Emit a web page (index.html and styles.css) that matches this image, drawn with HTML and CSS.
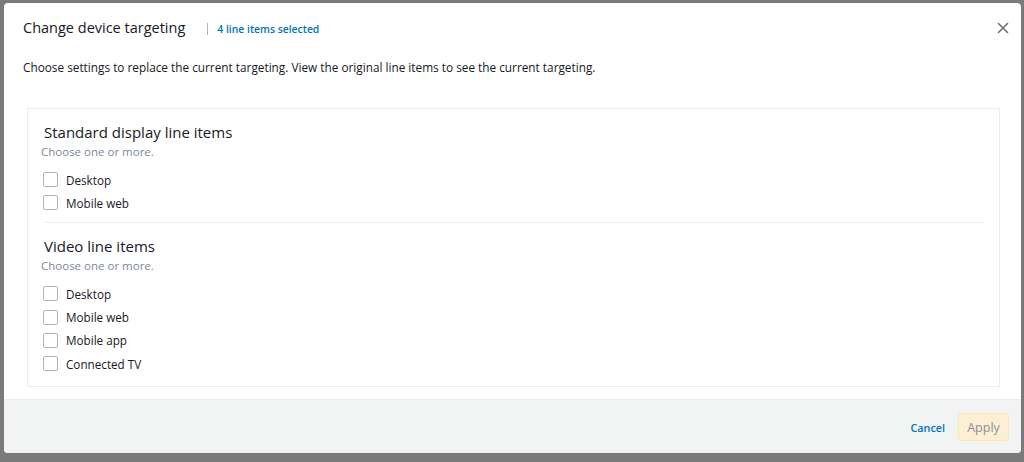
FILE: index.html
```html
<!DOCTYPE html>
<html lang="en">
<head>
<meta charset="utf-8">
<title>Change device targeting</title>
<link rel="stylesheet" href="styles.css">
</head>
<body>
<div class="modal">
  <div class="header">
    <h1 class="title">Change device targeting</h1>
    <span class="sep"></span>
    <a class="count">4 line items selected</a>
    <button class="close" aria-label="Close">
      <svg width="12" height="12" viewBox="0 0 12 12"><path d="M1.5 1.5 L10.5 10.5 M10.5 1.5 L1.5 10.5" stroke="#687078" stroke-width="1.6" fill="none" stroke-linecap="round"/></svg>
    </button>
  </div>
  <p class="desc">Choose settings to replace the current targeting. View the original line items to see the current targeting.</p>
  <div class="body">
    <div class="panel">
      <section class="group">
        <h2 class="gtitle">Standard display line items</h2>
        <div class="hint">Choose one or more.</div>
        <div class="opts">
          <label class="opt"><span class="box"></span>Desktop</label>
          <label class="opt"><span class="box"></span>Mobile web</label>
        </div>
      </section>
      <hr class="rule">
      <section class="group">
        <h2 class="gtitle">Video line items</h2>
        <div class="hint">Choose one or more.</div>
        <div class="opts">
          <label class="opt"><span class="box"></span>Desktop</label>
          <label class="opt"><span class="box"></span>Mobile web</label>
          <label class="opt"><span class="box"></span>Mobile app</label>
          <label class="opt"><span class="box"></span>Connected TV</label>
        </div>
      </section>
    </div>
  </div>
  <div class="footer">
    <a class="cancel">Cancel</a>
    <button class="apply">Apply</button>
  </div>
</div>
</body>
</html>
```
FILE: styles.css
```css
html, body {
  margin: 0;
  padding: 0;
}
*, *::before, *::after {
  box-sizing: border-box;
}
body {
  background: #7a7a7a;
  width: 1024px;
  height: 462px;
  overflow: hidden;
  font-family: "Open Sans", "Noto Sans", sans-serif;
  color: #16191f;
}
.modal {
  margin: 3px 3px 0 4px;
  height: 450px;
  background: #ffffff;
  border-radius: 4px;
  display: flex;
  flex-direction: column;
  overflow: hidden;
}
.header {
  display: flex;
  align-items: center;
  padding: 15px 12px 0 19px;
  height: 34px;
}
.title {
  margin: 0;
  font-size: 14.5px;
  font-weight: 400;
  line-height: 20px;
  color: #16191f;
}
.sep {
  width: 1px;
  height: 12px;
  background: #aab7b8;
  margin: 3px 0 0 22px;
}
.count {
  margin: 3px 0 0 9px;
  font-size: 10.4px;
  font-weight: 600;
  color: #0073bb;
  line-height: 16px;
}
.close {
  margin-left: auto;
  border: 0;
  background: transparent;
  padding: 0;
  width: 12px;
  height: 12px;
  display: flex;
  margin-top: 1px;
}
.desc {
  margin: 22px 0 0 19px;
  font-size: 11.8px;
  line-height: 16px;
  color: #16191f;
}
.body {
  padding: 33px 21px 0 23px;
}
.panel {
  border: 1px solid #eaeded;
  height: 279px;
  padding: 13px 16px 0 16px;
}
.group {
  display: flex;
  flex-direction: column;
}
.gtitle {
  margin: 0;
  font-size: 15px;
  font-weight: 400;
  line-height: 20px;
  color: #16191f;
}
.hint {
  margin: 2px 0 0 -3px;
  font-size: 11.5px;
  line-height: 16px;
  color: #7d8998;
}
.opts {
  margin-top: 8px;
  display: flex;
  flex-direction: column;
}
.opt {
  display: flex;
  align-items: center;
  height: 23.2px;
  font-size: 11.7px;
  color: #16191f;
}
.box {
  width: 15px;
  height: 15px;
  border: 1px solid #aab7b8;
  border-radius: 2px;
  margin: 0 8px 0 -1px;
  background: #fff;
}
.rule {
  border: 0;
  border-top: 1px solid #eaeded;
  margin: 8px 0 13px 0;
}
.footer {
  height: 54px;
  margin-top: 12px;
  background: #f2f3f3;
  border-top: 1px solid #eaeded;
  display: flex;
  align-items: center;
  justify-content: flex-end;
  padding: 1px 12px 0 0;
}
.cancel {
  font-size: 10.8px;
  font-weight: 600;
  color: #0073bb;
  margin-right: 13px;
}
.apply {
  width: 51px;
  height: 28px;
  background: #fdefd3;
  border: 1px solid #fbe6bc;
  border-radius: 3px;
  font-family: inherit;
  font-size: 12.5px;
  color: #8d9096;
  padding: 0;
}
```
